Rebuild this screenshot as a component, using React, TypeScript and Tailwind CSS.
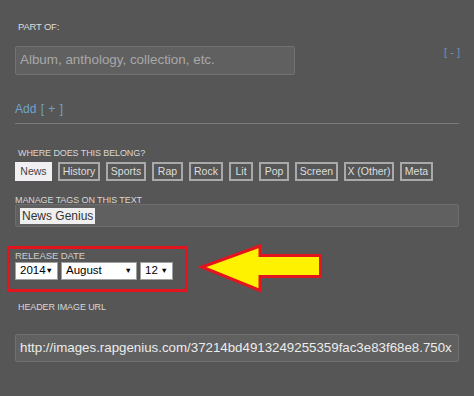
import React from 'react';

const tabs: { label: string; w: string; active?: boolean }[] = [
  { label: 'News', w: 'w-[37px]', active: true },
  { label: 'History', w: 'w-[42px]' },
  { label: 'Sports', w: 'w-[40px]' },
  { label: 'Rap', w: 'w-[31px]' },
  { label: 'Rock', w: 'w-[34px]' },
  { label: 'Lit', w: 'w-[24px]' },
  { label: 'Pop', w: 'w-[30px]' },
  { label: 'Screen', w: 'w-[43px]' },
  { label: 'X (Other)', w: 'w-[50px]' },
  { label: 'Meta', w: 'w-[33px]' },
];

function FakeSelect({ value, w }: { value: string; w: string }) {
  return (
    <div
      className={`${w} h-[18px] flex items-center justify-between bg-white border border-[#a0a0a0] pl-[4px] pr-[4px] text-[11.5px] leading-none text-black`}
    >
      <span>{value}</span>
      <span className="text-[7.5px]">▼</span>
    </div>
  );
}

export default function App() {
  return (
    <div
      className="w-[474px] h-[396px] overflow-hidden bg-[#565656] px-[15px]"
      style={{ fontFamily: '"Liberation Sans", Arial, sans-serif' }}
    >
      {/* Part of */}
      <div className="pt-[22px] pl-[3px] text-[9.5px] leading-[10px] text-[#dcdcdc] tracking-[-0.2px]">PART OF:</div>
      <div className="mt-[14px] flex items-start justify-between">
        <div className="w-[280px] h-[29px] flex items-center bg-[#606060] border border-[#727272] rounded-[2px] pl-[4px] text-[13.4px] text-[#a8a8a8]">
          Album, anthology, collection, etc.
        </div>
        <span className="mt-[-2px] mr-[-1px] text-[11px] text-[#6d93b5]">[ - ]</span>
      </div>
      <div className="mt-[28px] h-[12px] text-[12px] leading-[12px] [word-spacing:1px] text-[#6fa3cc]">Add [ + ]</div>
      <div className="mt-[8px] h-px bg-[#7a7a7a]" />

      {/* Category */}
      <div className="mt-[24px] pl-[3px] text-[9px] leading-[10px] text-[#d8d8d8] tracking-[-0.1px]">WHERE DOES THIS BELONG?</div>
      <div className="mt-[4px] flex gap-[6px]">
        {tabs.map((t) => (
          <div
            key={t.label}
            className={`${t.w} h-[19px] flex items-center justify-center text-[10.5px] border-2 ${
              t.active ? 'bg-[#f1eff1] border-[#f1eff1] text-[#444]' : 'border-[#a9a9a9] text-[#dedede]'
            }`}
          >
            {t.label}
          </div>
        ))}
      </div>

      {/* Tags */}
      <div className="mt-[14px] text-[9px] leading-[10px] text-[#d8d8d8] tracking-[-0.1px]">MANAGE TAGS ON THIS TEXT</div>
      <div className="-mt-px h-[23px] flex items-center bg-[#606060] border border-[#6c6c6c] rounded-[2px] pl-[4px]">
        <span className="h-[16px] px-[2px] flex items-center bg-[#efefef] text-[12px] text-[#333]">News Genius</span>
      </div>

      {/* Release date */}
      <div className="mt-[19px] flex items-center gap-[8px]">
        <div className="ml-[-8px] w-[181px] border-[3px] border-[#e4141e] pt-[2px] pb-[9px] pl-[5px]">
          <div className="text-[9.5px] leading-[10px] text-[#cfcfcf] tracking-[-0.1px]">RELEASE DATE</div>
          <div className="mt-[1px] flex gap-[3px]">
            <FakeSelect value="2014" w="w-[43px]" />
            <FakeSelect value="August" w="w-[76px]" />
            <FakeSelect value="12" w="w-[33px]" />
          </div>
        </div>
        <svg width="130" height="54" viewBox="0 0 130 54" className="-my-[4px]">
          <polygon
            points="6,25 64,4 64,13.5 124.5,13.5 124.5,34.5 64,34.5 64,48.5"
            fill="#fff200"
            stroke="#e4141e"
            strokeWidth="3"
            strokeLinejoin="miter"
          />
        </svg>
      </div>

      {/* Header image */}
      <div className="mt-[10px] pl-[3px] text-[9px] leading-[10px] text-[#d8d8d8] tracking-[-0.1px]">HEADER IMAGE URL</div>
      <div className="mt-[22px] h-[28px] flex items-center bg-[#606060] border border-[#707070] rounded-[2px] pl-[4px] text-[13.3px] text-[#ececec] whitespace-nowrap overflow-hidden">
        http://images.rapgenius.com/37214bd4913249255359fac3e83f68e8.750x
      </div>
    </div>
  );
}
